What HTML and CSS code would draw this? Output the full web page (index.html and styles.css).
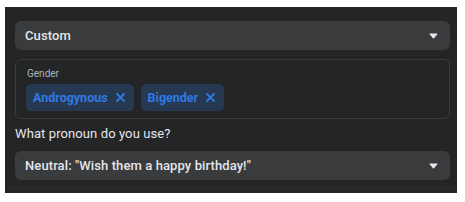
FILE: index.html
```html
<!DOCTYPE html>
<html>
<head>
<meta charset="utf-8">
<link rel="stylesheet" href="styles.css">
</head>
<body>
<div class="panel">
  <div class="select">
    <span class="select-text">Custom</span>
    <svg class="caret" width="9" height="6" viewBox="0 0 9 6"><path d="M0.8 0.6 H8.2 Q8.8 0.6 8.4 1.2 L5 5.2 Q4.5 5.8 4 5.2 L0.6 1.2 Q0.2 0.6 0.8 0.6 Z" fill="#e4e6eb"/></svg>
  </div>
  <div class="gender-box">
    <div class="label">Gender</div>
    <div class="chips">
      <span class="chip">Androgynous<svg class="x" width="9" height="9" viewBox="0 0 9 9"><path d="M1 1 L8 8 M8 1 L1 8" stroke="#2f7ae5" stroke-width="1.8" stroke-linecap="round"/></svg></span>
      <span class="chip">Bigender<svg class="x" width="9" height="9" viewBox="0 0 9 9"><path d="M1 1 L8 8 M8 1 L1 8" stroke="#2f7ae5" stroke-width="1.8" stroke-linecap="round"/></svg></span>
    </div>
  </div>
  <div class="question">What pronoun do you use?</div>
  <div class="select">
    <span class="select-text">Neutral: "Wish them a happy birthday!"</span>
    <svg class="caret" width="9" height="6" viewBox="0 0 9 6"><path d="M0.8 0.6 H8.2 Q8.8 0.6 8.4 1.2 L5 5.2 Q4.5 5.8 4 5.2 L0.6 1.2 Q0.2 0.6 0.8 0.6 Z" fill="#e4e6eb"/></svg>
  </div>
  <div class="bottom-line"></div>
</div>
</body>
</html>
```
FILE: styles.css
```css
html, body {
  margin: 0;
  padding: 0;
  background: #ffffff;
}
body {
  padding: 7px 0 0 5px;
  font-family: Roboto, "Liberation Sans", Arial, sans-serif;
}
.panel {
  width: 452px;
  height: 186px;
  box-sizing: border-box;
  background: #242526;
  padding: 14px 7px 0 10px;
  display: flex;
  flex-direction: column;
}
.select {
  height: 29px;
  background: #3a3b3c;
  border-radius: 6px;
  display: flex;
  align-items: center;
  justify-content: space-between;
  padding: 0 12px 0 10px;
  flex-shrink: 0;
}
.select-text {
  color: #e4e6eb;
  font-size: 13px;
  font-weight: 500;
  letter-spacing: 0.1px;
}
.caret {
  display: block;
}
.gender-box {
  margin-top: 9px;
  height: 60px;
  box-sizing: border-box;
  border: 1px solid #3a3b3d;
  border-radius: 6px;
  padding: 8px 10px 0 10px;
}
.label {
  color: #b0b3b8;
  font-size: 10px;
  line-height: 12px;
  margin-left: 1px;
}
.chips {
  display: flex;
  gap: 7px;
  margin-top: 4px;
}
.chip {
  height: 27px;
  background: #263951;
  border-radius: 5px;
  display: inline-flex;
  align-items: center;
  padding: 0 9px 0 7px;
  color: #2f7ae5;
  font-size: 12.5px;
  font-weight: 700;
}
.x {
  margin-left: 8px;
  display: block;
}
.question {
  color: #e4e6eb;
  font-size: 13px;
  line-height: 16px;
  margin-top: 7px;
  margin-bottom: 9px;
  letter-spacing: 0.1px;
}
.bottom-line {
  margin: 7px -7px 0 -10px;
  height: 1px;
  background: #2b2c2d;
}
```
